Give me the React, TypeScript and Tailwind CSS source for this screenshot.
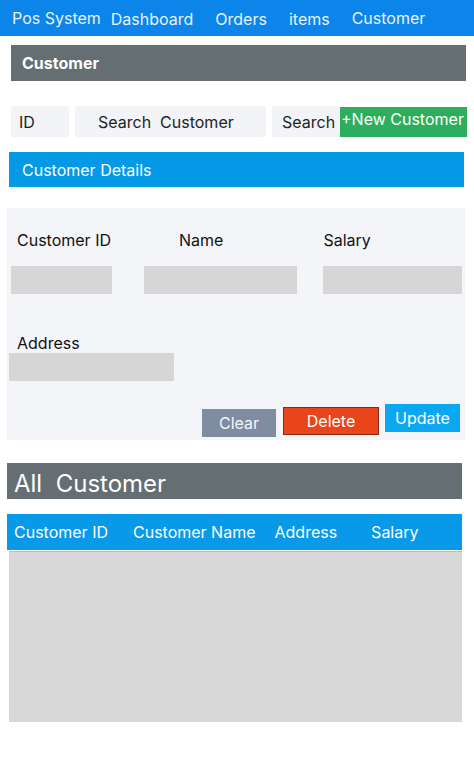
export default function App() {
  return (
    <div className="w-[474px] h-[757px] bg-white font-['Inter',sans-serif] text-black">
      <nav className="h-9 bg-[#0b85e9] flex items-center text-[#eaf2ff] text-[16px] leading-none">
        <span className="ml-3 -mt-[1px]">Pos System</span>
        <span className="ml-[10px] mt-[1px]">Dashboard</span>
        <span className="ml-[22px] mt-[1px]">Orders</span>
        <span className="ml-[22px] mt-[1px]">items</span>
        <span className="ml-[22px] -mt-[1px]">Customer</span>
      </nav>

      <div className="mt-[9px] mx-[11px] w-[455px] h-9 bg-[#646e73] flex items-center px-[11px] text-white font-bold text-[16px]">
        Customer
      </div>

      <div className="mt-[25px] ml-[11px] flex items-start text-[16px] text-[#222]">
        <div className="w-[58px] h-[31px] bg-[#f3f4f8] flex items-center pl-2">ID</div>
        <div className="ml-[6px] w-[191px] h-[31px] bg-[#f3f4f8] flex items-center pl-[23px] whitespace-pre">Search  Customer</div>
        <div className="ml-[6px] w-[68px] h-[31px] bg-[#f3f4f8] flex items-center pl-[10px]">Search</div>
        <div className="mt-[1px] w-[127px] h-[30px] bg-[#2dae5e] text-white pt-[2px] pl-[1px] leading-5">+New Customer</div>
      </div>

      <div className="mt-[15px] ml-[9px] w-[455px] h-[35px] bg-[#0399e6] flex items-center pl-[13px] text-white text-[16px]">
        Customer Details
      </div>

      <div className="mt-[21px] ml-[7px] w-[458px] h-[232px] bg-[#f4f5f9] flex flex-col text-[16px] text-[#111]">
        <div className="flex mt-[22px] h-5 items-center">
          <span className="ml-[10px]">Customer ID</span>
          <span className="ml-[68px]">Name</span>
          <span className="ml-[100px]">Salary</span>
        </div>
        <div className="flex mt-[16px]">
          <div className="ml-[4px] w-[101px] h-[28px] bg-[#d6d6d6]" />
          <div className="ml-[32px] w-[153px] h-[28px] bg-[#d6d6d6]" />
          <div className="ml-[26px] w-[139px] h-[28px] bg-[#d6d6d6]" />
        </div>
        <span className="ml-[10px] mt-[39px] h-5 flex items-center">Address</span>
        <div className="ml-[2px] w-[165px] h-[28px] bg-[#d6d6d6]" />
        <div className="flex items-start mt-[23px]">
          <div className="ml-[195px] mt-[5px] w-[74px] h-[28px] bg-[#7f8ca2] text-[#f4f6fa] flex items-center justify-center">Clear</div>
          <div className="ml-[7px] mt-[3px] w-[96px] h-[28px] bg-[#e8451a] border border-[#8a2a10] text-white flex items-center justify-center">Delete</div>
          <div className="ml-[6px] w-[75px] h-[28px] bg-[#0aa8f2] text-white flex items-center justify-center">Update</div>
        </div>
      </div>

      <div className="mt-[23px] ml-[7px] w-[455px] h-9 bg-[#646e73] flex items-center pl-[7px] pt-[6px] text-white text-[24px] whitespace-pre">
        All  Customer
      </div>

      <div className="mt-[15px] ml-[7px] w-[455px] h-9 bg-[#0899e8] flex items-center text-white text-[16px]">
        <span className="ml-[7px]">Customer ID</span>
        <span className="ml-[25px]">Customer Name</span>
        <span className="ml-[19px]">Address</span>
        <span className="ml-[34px]">Salary</span>
      </div>
      <div className="ml-[9px] mt-[1px] w-[453px] h-[171px] bg-[#d8d8d8] border-t border-[#8cc8f0]" />
    </div>
  );
}
